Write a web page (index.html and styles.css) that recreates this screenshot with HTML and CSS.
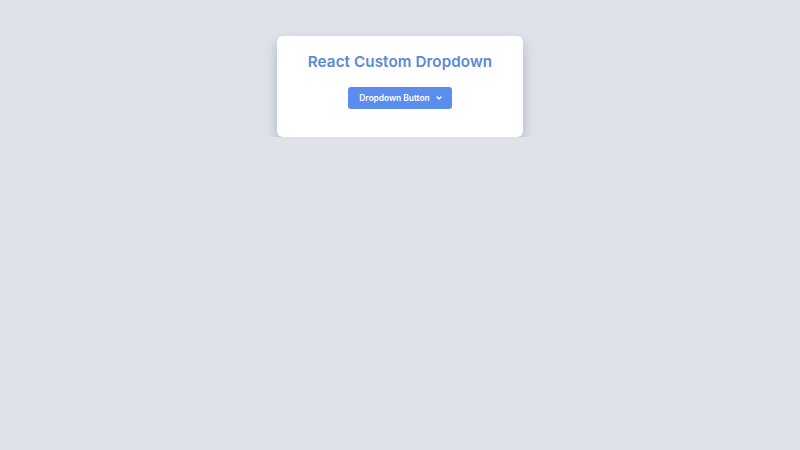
FILE: index.html
```html
<!DOCTYPE html>
<html>
<head>
<meta charset="utf-8">
<link rel="stylesheet" href="styles.css">
</head>
<body>
<div class="page">
  <div class="card">
    <h1 class="title">React Custom Dropdown</h1>
    <button class="dd-btn">Dropdown Button
      <svg class="chev" width="6" height="6" viewBox="0 0 6 6"><path d="M1 2 L3 4 L5 2" fill="none" stroke="#fff" stroke-width="1.4" stroke-linecap="round" stroke-linejoin="round"/></svg>
    </button>
  </div>
</div>
</body>
</html>
```
FILE: styles.css
```css
html, body {
  margin: 0;
  padding: 0;
  background: #dfe2e9;
  font-family: Inter, "Noto Sans", sans-serif;
}
.page {
  display: flex;
  justify-content: center;
  padding-top: 36px;
}
.card {
  width: 246px;
  height: 101px;
  box-sizing: border-box;
  background: #fff;
  border-radius: 6px;
  box-shadow: 0 6px 12px rgba(100, 112, 135, 0.4);
  display: flex;
  flex-direction: column;
  align-items: center;
  padding-top: 16px;
}
.title {
  margin: 0;
  font-size: 15.2px;
  font-weight: 600;
  color: #5a89d6;
  line-height: 20px;
  letter-spacing: 0.1px;
}
.dd-btn {
  margin-top: 15px;
  width: 104px;
  height: 22px;
  border: none;
  border-radius: 3px;
  background: #5b8def;
  color: #fff;
  font-family: Inter, "Noto Sans", sans-serif;
  font-size: 8.4px;
  font-weight: 600;
  display: flex;
  align-items: center;
  justify-content: center;
  gap: 6px;
  padding: 0 0 0 1px;
}
.chev {
  display: block;
}
```
